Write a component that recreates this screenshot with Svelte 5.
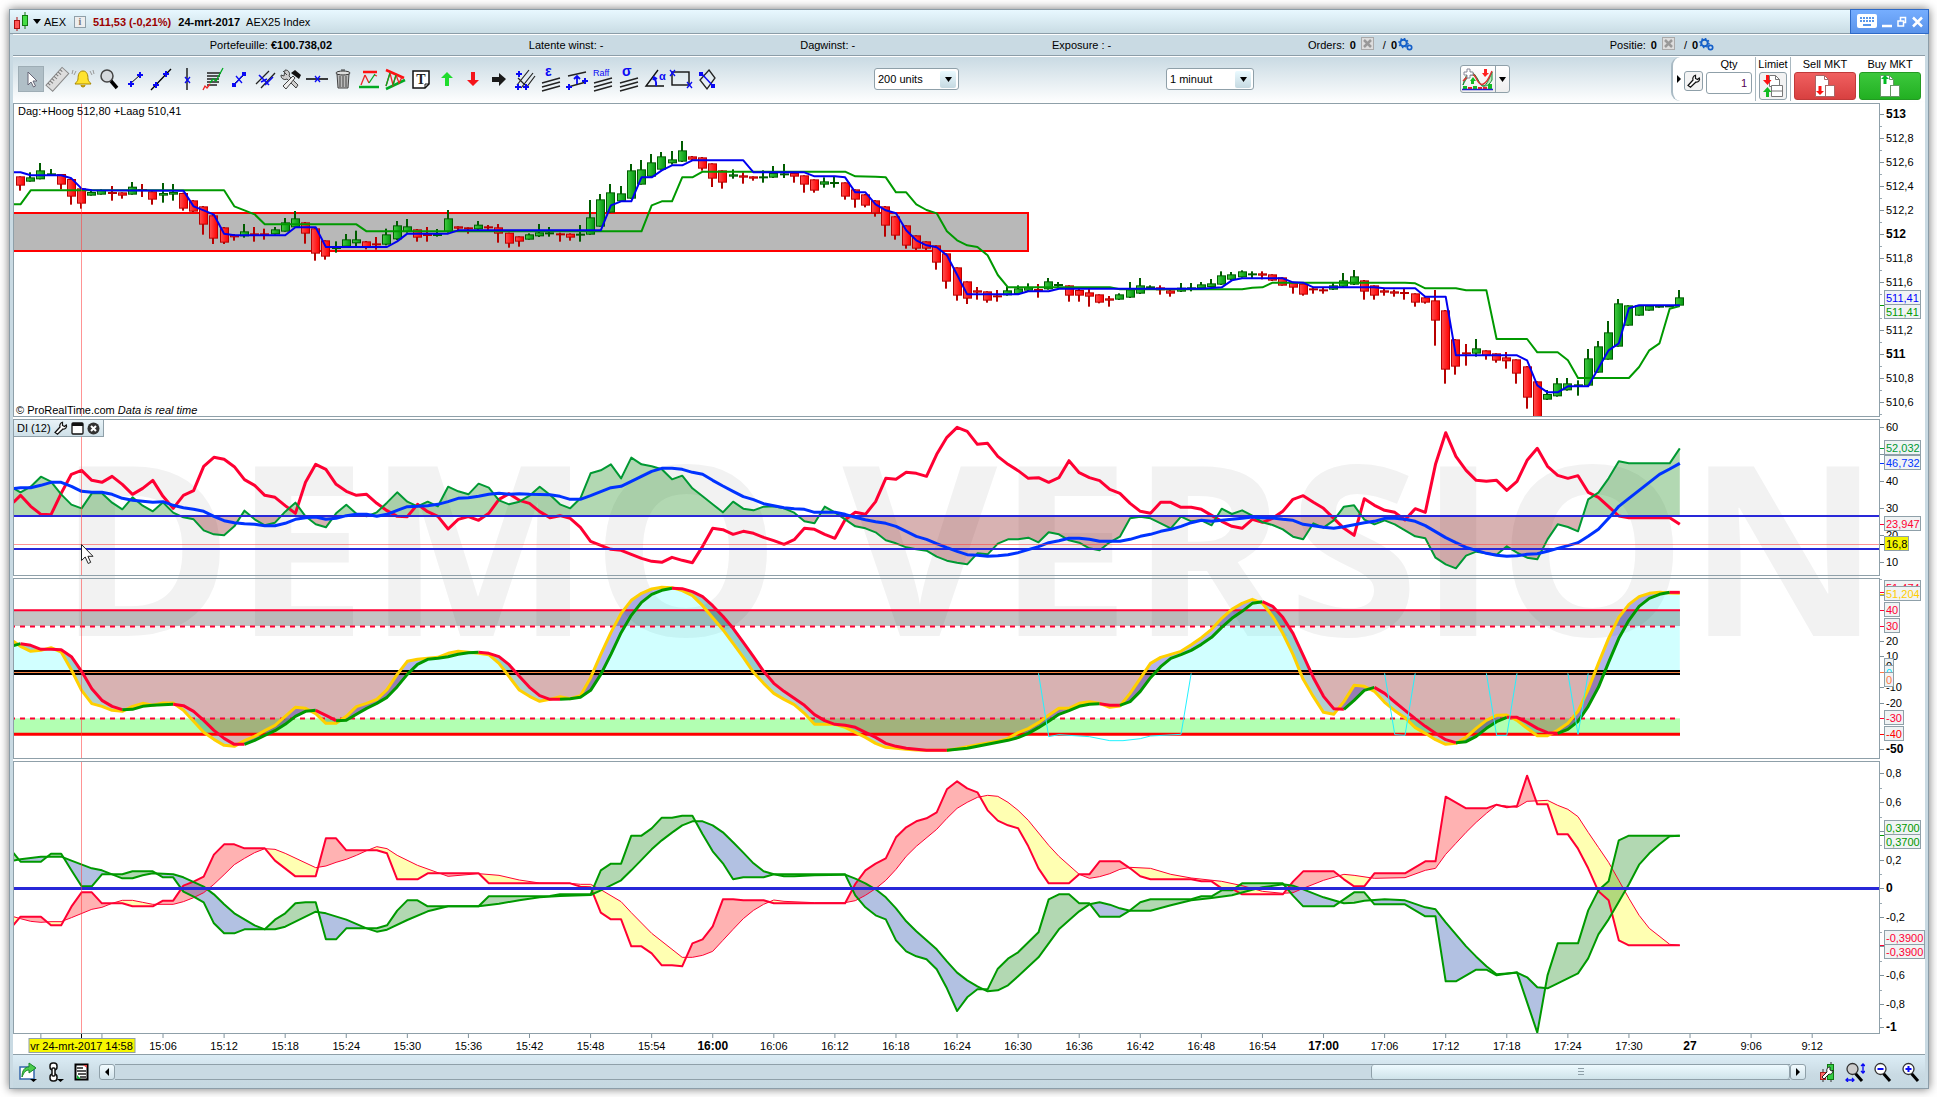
<script>
  // Horizontal scale: one bar per minute, bar 0 is 14:52.
  const bx = (i) => 20.5 + 10.18 * i;

  // Series are listed as a left-edge value followed by bars 0..163,
  // or as "bar,value" pairs that are interpolated in between.
  const dense = (s) => s.trim().split(/\s+/).map((v, n) => [n === 0 ? -0.7 : n - 1, Number(v)]);
  const sparse = (s) => s.trim().split(/\s+/).map((p) => p.split(',').map(Number));
  const pts = (a) => a.map(([i, v]) => `${bx(i).toFixed(1)},${v}`).join(' ');

  function at(a, i) {
    for (let n = 1; n < a.length; n++) {
      if (i <= a[n][0]) {
        const [i0, v0] = a[n - 1];
        const [i1, v1] = a[n];
        return v0 + ((v1 - v0) * (i - i0)) / (i1 - i0);
      }
    }
    return a[a.length - 1][1];
  }

  // Splits the area between two series into runs with a above b and runs with a below b.
  function between(a, b) {
    const out = { up: '', down: '' };
    const idx = [-0.7];
    for (let i = 0; i <= 163; i++) idx.push(i);
    const rows = [];
    for (const i of idx) {
      const va = at(a, i);
      const vb = at(b, i);
      const last = rows[rows.length - 1];
      if (last && (last[1] - last[2]) * (va - vb) < 0) {
        const t = (last[1] - last[2]) / (last[1] - last[2] - (va - vb));
        const v = last[1] + (va - last[1]) * t;
        rows.push([last[0] + (i - last[0]) * t, v, v]);
      }
      rows.push([i, va, vb]);
    }
    let run = [rows[0]];
    const flush = () => {
      if (run.length < 2) return;
      const d = run.reduce((s, r) => s + r[1] - r[2], 0);
      const p = [...run.map((r) => [r[0], r[1]]), ...run.slice().reverse().map((r) => [r[0], r[2]])];
      out[d < 0 ? 'up' : 'down'] += 'M' + p.map(([i, v]) => `${bx(i).toFixed(1)} ${v.toFixed(1)}`).join('L') + 'Z';
    };
    for (let n = 1; n < rows.length; n++) {
      run.push(rows[n]);
      if (Math.abs(rows[n][1] - rows[n][2]) < 0.01) {
        flush();
        run = [rows[n]];
      }
    }
    flush();
    return out;
  }
  const level = (v) => [[-0.7, v], [163, v]];

  // Candles: high, body top, body bottom, low; r = falling, g = rising.
  const candles = `r229,229,257,272 g217,232,245,245 g189,211,238,238 g207,220,224,226 r222,222,254,268 r236,237,290,314 r264,265,311,326 g270,276,287,287
g268,270,284,284 r258,276,280,302 r277,277,287,296 g246,260,284,284 r252,267,270,291 r273,274,299,314 g249,279,287,308 g252,276,284,302
r278,279,326,332 r300,301,335,336 r318,319,374,404 r345,346,416,432 r381,382,428,432 r402,405,412,422 g372,394,409,413 r381,400,404,425
r386,400,404,419 g381,388,403,404 g354,367,395,395 g333,355,382,384 r366,367,401,431 r384,385,461,482 r421,421,470,479 g424,441,445,458
g402,418,440,442 g392,418,430,440 r423,424,443,448 r411,430,434,449 g386,403,434,436 g363,376,418,420 g357,379,396,398 r387,388,413,425
r381,402,406,425 g387,402,406,410 g330,355,396,398 r379,379,386,392 r382,382,388,401 g363,374,388,390 r375,379,383,392 r372,382,401,428
r398,398,431,443 r409,409,425,440 g400,403,419,419 g372,397,409,411 g381,397,403,410 r398,400,404,425 r400,401,413,422 g375,401,407,425
g300,352,404,404 g282,298,380,380 g252,277,338,338 g258,280,304,306 g192,211,296,296 g180,208,254,254 g162,187,230,232 g156,169,209,209
g153,178,190,194 g123,151,185,186 r168,169,179,180 r171,172,206,212 r190,190,236,261 r211,211,248,266 g208,223,230,236 r217,226,233,251
r229,229,236,242 g211,229,233,248 g198,219,233,234 g192,220,224,234 r218,219,230,248 r226,226,254,278 r238,238,272,278 g232,244,254,263
g231,246,250,263 r247,247,290,299 r268,268,299,323 r282,283,317,322 r300,301,340,350 r318,319,377,410 r348,349,407,419 r376,376,437,446
r406,406,446,450 r424,424,446,450 r436,436,488,509 r460,460,545,566 r502,502,587,602 r544,544,596,612 r561,571,578,599 r574,574,602,608
r570,586,590,605 g560,571,586,587 g556,565,582,584 g550,562,572,573 r552,567,571,593 g534,544,568,569 g546,552,556,562 r556,556,587,605
r565,570,587,605 r567,577,590,620 r583,583,608,610 r588,595,602,620 g580,583,599,600 g546,568,593,594 g534,556,581,582 g556,559,563,566
r556,562,571,584 r570,571,581,590 g549,563,575,576 g549,562,566,574 g546,553,565,566 g537,550,561,562 g514,526,554,555 g516,523,539,540
g511,514,532,533 g514,520,524,534 r514,520,527,538 r523,523,542,543 r532,532,557,557 r546,547,563,581 r550,551,584,587 r564,565,569,581
r562,568,572,581 g547,556,569,570 g519,541,560,562 g510,529,554,555 r540,541,575,599 r556,556,587,599 r565,571,578,587 r569,574,581,590
r567,576,580,599 r580,580,608,620 r591,592,608,611 r570,601,662,737 r630,631,809,851 r717,718,800,824 r732,757,761,797 g717,745,761,770
r751,751,767,779 r760,760,782,788 r756,772,784,806 r778,778,821,851 r798,799,893,926 r844,844,960,960 g870,882,899,900 g834,850,889,890
g834,850,871,872 g841,853,857,887 g747,775,857,858 g723,739,818,818 g663,697,779,779 g597,610,740,740 g616,616,677,677 g616,616,647,647
g616,617,632,632 g616,617,623,623 g615,616,619,619 g570,592,617,617`
    .split(/\s+/)
    .map((c, i) => {
      const [hi, top, bottom, lo] = c.slice(1).split(',').map(Number);
      return { x: Math.floor(bx(i)), up: c[0] === 'g', hi, top, h: Math.max(6, bottom - top), lo };
    });

  const fast = sparse(`-0.7,217 0,217 1,226 4,226 5,235 6,266 7,271 16,272 17,319 18,331 19,344 20,401 21,406 26,406 27,382 29,382 30,441 36,441 37,424 38,401
42,401 43,391 57,391 58,316 59,304 60,304 61,232 62,232 63,211 64,196 65,196 66,181 71,181 72,217 77,217 78,229 80,229 81,232 82,277 83,277 84,313 85,331 86,340
87,391 88,421 89,436 90,442 91,466 92,524 93,583 98,583 99,574 101,574 102,566 116,566 118,562 119,541 120,535 124,535 125,547 126,548 127,562 133,562 134,565
137,565 138,590 140,590 141,766 147,766 148,781 149,856 150,877 151,877 152,859 154,859 155,805 156,751 157,730 158,625 159,616 163,616`);
  const slow = sparse(`-0.7,313 0,313 1,271 20,271 21,319 22,331 23,343 24,373 33,373 34,394 61,394 62,316 63,304 64,304 65,232 66,232 67,215 81,215 82,229 84,230
85,232 86,277 87,277 88,313 89,330 90,340 91,394 92,421 93,436 94,441 95,466 96,525 97,562 107,562 108,568 120,568 121,563 122,562 123,548 136,548 137,550
138,565 141,565 142,571 144,571 145,717 148,717 149,757 151,757 152,781 153,834 158,834 159,801 160,751 161,730 162,626 163,618`);

  const diMinus = dense(`277 256 289 313 314 250 193 181 211 217 199 223 253 235 211 259 295 256 242 169 142 148 170 209 226 256 262 287 310 217 163 178 223 244
256 253 280 302 319 320 283 305 319 357 328 320 331 310 268 251 271 280 305 323 317 325 352 394 406 418 421 433 445 454 457 442 451 458 409 355 359 373 364 370 382
392 403 389 355 358 373 385 329 307 313 275 205 208 187 190 199 133 82 52 64 103 100 139 163 182 205 203 217 203 152 188 203 212 238 250 280 304 310 277 277 292
292 298 316 334 349 355 328 337 325 304 268 257 277 295 325 355 376 266 286 301 307 330 296 307 163 68 139 181 211 214 211 241 214 151 115 169 196 205 197 247 262
290 318 323 323 323 323 323 343`);
  const diPlus = dense(`235 247 230 200 215 253 284 295 250 250 278 298 262 287 304 277 308 322 328 361 373 376 349 302 328 346 338 305 278 319 343 352 310 284 311
319 307 278 247 275 289 275 289 230 244 253 221 233 271 283 275 257 230 254 283 295 265 190 181 163 205 143 163 169 178 208 197 235 259 283 307 275 296 301 290 289
295 308 334 340 290 307 328 349 355 367 391 400 412 418 422 440 452 458 463 430 433 401 388 388 383 397 367 373 391 398 415 421 397 380 325 320 325 340 355 320 334
331 346 296 312 301 317 337 345 358 380 388 340 353 331 290 286 329 343 331 343 361 379 385 443 463 475 437 425 430 434 409 428 443 448 388 343 351 364 268 248 205
154 160 160 160 160 160 115`);
  const diAvg = sparse(`-0.7,236 0,233 1,233 2,226 3,217 4,217 5,229 6,244 7,247 8,247 9,253 10,265 11,271 12,274 13,277 14,275 15,286 16,293 17,298 18,304 19,319
20,332 21,338 22,341 23,343 24,347 25,347 26,340 27,328 28,323 29,321 30,328 31,325 32,317 33,313 34,313 35,319 36,313 37,301 38,290 39,289 40,287 41,283 42,275
43,265 44,263 45,259 46,253 47,250 48,253 49,251 50,253 52,254 53,259 54,268 55,268 56,257 57,245 58,233 59,229 60,214 61,199 62,184 63,175 64,175 65,178 66,187
67,193 68,211 69,228 70,244 71,260 72,269 73,281 74,287 75,293 76,296 77,298 78,307 80,307 81,313 82,322 83,329 84,335 85,340 86,349 87,364 88,379 89,388 90,401
91,413 92,424 93,434 94,436 95,439 96,437 97,434 98,428 99,419 100,410 101,398 102,392 103,385 104,385 105,388 106,394 108,394 109,388 110,379 111,373 112,364
113,358 114,349 115,338 116,331 117,334 118,331 119,328 120,325 121,321 122,323 123,324 124,328 125,331 126,343 127,347 128,352 129,355 130,350 131,344 132,338
133,334 134,325 135,325 136,328 137,334 138,347 139,365 140,383 141,398 142,412 143,421 144,430 145,436 146,439 147,437 148,433 149,431 150,424 151,415 152,407
153,398 154,379 155,358 156,325 157,289 158,265 159,241 160,217 161,193 162,177 163,160`);

  const cycle = dense(`694 709 724 721 713 726 780 841 881 889 901 904 889 880 886 879 879 901 934 967 988 1006 1009 992 979 962 946 919 892 895 911 940 940 919
890 880 868 839 793 754 748 745 742 730 724 727 730 734 760 800 840 859 874 868 860 866 857 803 733 668 610 571 550 537 532 533 542 557 587 623 659 700 742 787
820 850 868 884 910 943 943 943 952 967 982 1000 1012 1015 1018 1020 1021 1021 1021 1016 1010 1004 999 994 985 968 956 938 916 895 895 880 875 880 892 888 850 805
760 742 733 724 704 683 658 625 598 580 568 580 619 670 733 808 860 907 913 875 826 829 844 877 902 923 953 970 989 1003 1000 982 955 931 916 915 931 955 977 977
961 940 904 838 760 685 622 583 560 550 547 549 550`);
  const signal = dense(`707 701 706 718 718 719 740 784 836 871 889 899 898 889 886 884 883 887 904 931 961 985 1003 1003 991 976 962 943 919 904 901 916 932 931
913 895 880 862 830 793 763 748 745 740 733 728 727 730 740 764 799 832 857 868 868 866 862 841 793 733 668 616 577 553 541 535 536 545 560 587 619 655 697 740
784 820 844 865 886 914 932 943 946 952 967 982 1000 1009 1015 1018 1021 1021 1021 1018 1015 1009 1003 997 991 983 970 953 934 913 902 889 883 881 886 886 875 844
803 770 745 734 721 703 682 652 625 604 580 575 589 622 670 736 803 859 896 898 871 841 832 850 876 901 926 949 970 989 998 995 979 955 935 922 922 937 955 968
970 958 934 889 832 757 685 631 589 565 553 547 547`);
  const signalRuns = [];
  for (let n = 1; n < signal.length; n++) {
    const up = signal[n][1] < signal[n - 1][1];
    const last = signalRuns[signalRuns.length - 1];
    if (last && last.up === up) last.p.push(signal[n]);
    else signalRuns.push({ up, p: [signal[n - 1], signal[n]] });
  }
  const probes = [
    '100,790 101,980 102,974 105,980 107,992 108.3,992 110,986 111,978 114,973 115,790',
    '134,790 135,974 136,976 137,790',
    '144,790 145,976 146,976 147,790',
    '152,790 153,973 154,790'
  ].map(sparse);

  const bear = sparse(`-0.7,525 0,500 2,500 3,526 4,526 5,470 6,427 7,427 8,460 10,460 11,469 13,469 14,452 15,452 16,407 17,395 18,380 19,314 20,283 21,283 22,295
24,295 25,332 27,379 29,379 30,265 31,265 32,301 35,301 36,310 37,388 39,388 40,370 45,370 46,400 54,400 55,410 56,412 57,488 58,508 59,508 60,589 61,589 62,610
63,646 64,646 65,649 66,580 67,568 68,529 69,448 70,448 71,451 73,451 74,460 81,460 82,402 83,361 84,341 85,325 86,262 87,232 88,214 89,205 90,187 91,118 92,94
93,115 94,127 95,181 96,212 97,226 98,235 99,289 100,355 101,400 103,400 104,373 105,373 106,334 108,334 109,355 110,379 111,388 115,388 116,394 117,394 118,415
119,416 120,433 124,433 125,395 126,364 129,364 130,388 131,409 132,409 133,370 136,370 138,334 139,334 140,140 142,175 144,175 145,164 146,172 147,168 148,77
149,163 150,163 151,253 152,253 153,296 154,355 155,424 156,451 157,571 158,586 163,586`);
  const bearAvg = sparse(`-0.7,500 0,506 1,514 2,517 3,515 4,515 5,503 7,478 8,472 9,460 10,451 11,451 12,457 13,463 15,463 16,455 17,443 18,428 19,403 20,374
21,344 22,325 23,308 24,296 25,298 26,310 29,353 30,348 31,337 32,328 33,316 34,302 35,290 36,296 37,316 39,346 42,379 45,371 47,376 49,390 51,399 54,400 55,403
56,403 57,419 59,455 60,488 62,550 65,622 66,622 67,616 68,604 69,571 70,538 71,506 72,481 73,463 74,450 75,454 78,458 81,458 82,452 83,436 84,416 85,391 86,358
87,319 88,289 90,238 91,205 92,175 93,157 94,142 95,136 96,139 97,157 98,181 99,211 101,286 102,319 104,373 105,385 106,380 107,371 108,358 109,352 111,355
113,373 115,384 118,394 120,407 122,424 124,430 125,428 126,415 128,391 130,373 131,376 133,385 136,383 138,361 139,355 140,313 141,280 142,247 143,217 144,190
145,165 146,168 147,172 148,154 150,151 151,166 152,178 153,200 154,247 155,292 156,337 157,391 158,445 159,496 160,535 162,583 163,586`);
  const bull = sparse(`-0.7,309 0,335 2,335 3,311 4,311 5,361 6,409 7,409 8,373 10,373 11,364 13,364 14,382 15,382 16,425 17,440 18,457 19,520 20,550 21,550 22,538
24,538 25,509 26,490 27,460 28,457 29,457 30,568 31,568 32,535 35,535 36,526 37,482 38,451 39,451 40,469 45,469 46,439 52,438 53,433 56,433 57,361 58,341 59,341
60,257 61,257 62,235 63,203 64,203 65,197 66,197 67,253 68,304 69,340 70,388 71,382 73,382 74,373 81,373 82,436 83,472 84,496 85,508 86,571 87,604 88,619 89,628
90,658 91,715 92,783 93,742 94,718 95,718 96,656 97,626 98,607 99,577 100,547 101,448 102,433 103,433 104,460 105,460 106,500 108,500 109,481 110,457 111,448
115,448 116,439 117,439 118,421 119,421 120,400 124,400 125,437 126,469 129,469 130,448 131,427 132,427 133,463 136,463 138,499 139,499 140,694 141,694 143,659
144,659 145,676 147,667 148,757 149,848 150,676 151,580 153,580 154,481 155,421 156,394 157,271 158,257 163,257`);
  const bullAvg = sparse(`-0.7,332 0,328 2,320 4,320 5,332 7,355 8,361 9,373 10,385 11,385 12,376 13,370 15,373 16,382 18,410 19,433 20,463 21,490 23,526 24,538
25,538 26,530 29,485 30,490 32,509 34,535 35,545 36,539 38,510 40,484 42,469 45,469 47,461 49,451 51,442 53,438 56,435 57,421 59,391 60,361 62,298 63,271 64,248
65,226 66,214 67,214 68,226 69,247 70,277 71,308 72,340 73,364 74,373 75,379 76,379 78,376 81,374 82,386 83,400 84,418 85,442 86,475 87,514 88,544 90,598 91,634
92,668 93,691 94,709 95,724 96,721 97,706 98,679 100,622 101,580 102,538 104,484 105,463 106,457 107,464 108,475 109,482 111,482 113,466 115,451 117,444 119,436
121,419 122,412 124,403 125,407 126,418 128,442 130,460 131,458 132,452 134,448 136,451 138,472 139,478 140,517 141,553 142,589 143,620 144,649 145,673 147,668
148,682 149,712 150,715 151,700 153,670 154,625 155,553 156,508 157,455 158,403 159,344 160,310 161,283 162,259 163,257`);

  const diFill = between(diPlus, level(318));
  const signalFill = between(signal, level(787));
  const gapFill = between(cycle, signal);
  const bearFill = between(bear, bearAvg);
  const bullFill = between(bull, bullAvg);

  // Value axis: [y, text, bold], tick-only entries have no text.
  const labels = [
    [114, '513', 1], [138, '512,8'], [162, '512,6'], [186, '512,4'], [210, '512,2'], [234, '512', 1], [258, '511,8'], [282, '511,6'],
    [330, '511,2'], [354, '511', 1], [378, '510,8'], [402, '510,6'],
    [427, '60'], [454, ''], [481, '40'], [508, '30'], [535, '20'], [562, '10'],
    [595, ''], [641, '20'], [656, '10'], [687, '-10'], [703, '-20'], [749, '-50', 1],
    [773, '0,8'], [802, '0,6'], [831, ''], [860, '0,2'], [888, '0', 1], [917, '-0,2'], [946, ''], [975, '-0,6'], [1004, '-0,8'], [1027, '-1', 1]
  ];
  const minor = [126, 150, 174, 198, 222, 246, 270, 294, 318, 342, 366, 390, 414, 579, 788, 817, 845, 874, 903, 932, 961, 990, 1018];
  const red = '#ff0033';
  const tags = [
    { y: 290, t: '511,41', w: 36, c: '#0000ff' },
    { y: 304, t: '511,41', w: 36, c: '#009900', k: 305 },
    { y: 440, t: '52,032', w: 36, c: '#009933', k: 448 },
    { y: 455, t: '46,732', w: 36, c: '#0033ff', k: 463 },
    { y: 516, t: '23,947', w: 36, c: red, k: 524 },
    { y: 536, t: '16,8', w: 24, c: '#000000', bg: '#f4f400', k: 544 },
    { y: 580, t: '51,474', w: 36, c: red, k: 592 },
    { y: 586, t: '51,204', w: 36, c: '#ffcc00', k: 594 },
    { y: 602, t: '40', w: 15, c: red, k: 610 },
    { y: 618, t: '30', w: 15, c: red, k: 626 },
    { y: 658, t: '0', w: 9, c: '#000000' },
    { y: 665, t: '0', w: 9, c: '#00e5ff' },
    { y: 672, t: '0', w: 9, c: '#ff7744', k: 672 },
    { y: 710, t: '-30', w: 19, c: red, k: 718 },
    { y: 726, t: '-40', w: 19, c: '#ff0000', k: 734 },
    { y: 820, t: '0,3700', w: 36, c: '#009900' },
    { y: 834, t: '0,3700', w: 36, c: '#009900', k: 835 },
    { y: 930, t: '-0,3900', w: 40, c: red },
    { y: 944, t: '-0,3900', w: 40, c: red, k: 945 }
  ];

  const times = [[2, ''], [8, '']];
  for (let i = 14; i <= 158; i += 6) {
    const m = 52 + i;
    times.push([i, `${14 + Math.floor(m / 60)}:${String(m % 60).padStart(2, '0')}`]);
  }
  times.push([164, '27'], [170, '9:06'], [176, '9:12']);
  const pct = (x) => `${((x - 13) / 1912) * 100}%`;

  const cross = (x, y) => `<path d="M${x - 3} ${y}h6M${x} ${y - 3}v6" stroke="#0a0af5" stroke-width="2"/>`;
  const ex = (x, y) => `<path d="M${x - 2} ${y - 3}l5 6m0-6l-5 6" stroke="#0a0af5" stroke-width="1.3"/>`;
  const hatch = '<path d="M3 16l18-5M3 20l18-5M3 24l18-5" stroke="#222" stroke-width="1.4"/>';
  const tools = [
    ['Aanwijzer', '<path d="M9 5v13l3-3 2.500 5 2-1-2.500-5h4z" fill="#fff" stroke="#667" />'],
    ['Meetlat', '<g transform="rotate(-48 12 12)"><rect x="0" y="8" width="24" height="9" fill="#ddd" stroke="#888"/><path d="M3 8v3M6 8v4M9 8v3M12 8v4M15 8v3M18 8v4M21 8v3" stroke="#777"/></g>'],
    ['Alarm', '<path d="M12 4c-4 0-5 4-5 8 0 2-2 3-3 5h16c-1-2-3-3-3-5 0-4-1-8-5-8z" fill="#ffe32e" stroke="#a88700"/><path d="M10 18a2 2 0 0 0 4 0" fill="#d9a800" stroke="#a88700"/><path d="M5 4l-2 4M2 3L1 7M19 4l2 4M22 3l1 4" stroke="#999"/>'],
    ['Zoom', '<circle cx="10" cy="9" r="6" fill="#d5d9dd" stroke="#444" stroke-width="1.500"/><path d="M14 14l6 7" stroke="#000" stroke-width="3.500"/>'],
    ['Segment', '<path d="M7 17l10-9" stroke="#000"/>' + cross(8, 17) + cross(17, 8)],
    ['Rechte lijn', '<path d="M2 23L22 2" stroke="#000" stroke-width="1.300"/>' + cross(7, 18) + cross(17, 7)],
    ['Verticale lijn', '<path d="M12 1v22" stroke="#000" stroke-width="1.300"/>' + ex(12, 13)],
    ['Fibonacci', '<path d="M6 6h14M6 9h13M6 12h12M6 15h12M6 18h10" stroke="#222" stroke-width="1.300"/><path d="M9 16l3-4 3 2 7-13" stroke="#0a2" fill="none" stroke-width="1.300"/><path d="M2 23l2-4 2 2 3-4" stroke="#e22" fill="none" stroke-width="1.300"/>'],
    ['Gespiegeld segment', '<path d="M6 18L18 7" stroke="#000"/><path d="M9 9l6 7m0-7l-6 7" stroke="#0a0af5" stroke-width="1.300"/><rect x="5" y="16" width="4" height="4" fill="#0a0af5"/><rect x="15" y="5" width="4" height="4" fill="#0a0af5"/>'],
    ['Evenwijdige lijnen', '<path d="M3 17L16 4M8 21L22 6" stroke="#222" stroke-width="1.300"/><path d="M12 18l8-8M6 8l10 10M8 15l6-3" stroke="#0a0af5" stroke-width="1.600"/>'],
    ['Instellingen', '<path d="M4 4l4 4M6 3a4 4 0 0 1 4 6l9 9-2 3-9-9a4 4 0 0 1-6-4l3 1z" fill="#ccc" stroke="#444"/><path d="M4 19L14 9l2 2L7 22z" fill="#eee" stroke="#444"/><path d="M12 6l4-3 6 5-2 4z" fill="#111"/>'],
    ['Horizontale lijn', '<path d="M1 12h22" stroke="#000" stroke-width="1.500"/>' + ex(12, 12)],
    ['Verwijderen', '<path d="M6 7h12l-1 14H7z" fill="#bbb" stroke="#444"/><path d="M9 9v11M12 9v11M15 9v11" stroke="#444"/><ellipse cx="12" cy="6" rx="7" ry="2" fill="#ddd" stroke="#333"/><path d="M10 3h4" stroke="#333"/>'],
    ['Steun en weerstand', '<path d="M6 5h14" stroke="#f11" stroke-width="2.500"/><path d="M2 20h20" stroke="#0a2" stroke-width="2.500"/><path d="M4 18l4-10" stroke="#e22" stroke-width="1.300"/><path d="M8 8l4 8M17 8l3 1" stroke="#e22" stroke-width="1.300"/><path d="M12 16l6-9" stroke="#0a2" stroke-width="1.300"/>'],
    ['Driehoek', '<path d="M3 3l18 8" stroke="#f11" stroke-width="2.500"/><path d="M3 22l19-9" stroke="#0a2" stroke-width="2.500"/><path d="M3 19L7 6l3 12 3-10 3 8 3-6" stroke="#e22" stroke-width="1.300" fill="none"/><path d="M3 19L7 6M10 18l3-10" stroke="#0a2" stroke-width="1.300"/>'],
    ['Tekst', '<path d="M4 4h16v13l-4 4H4z" fill="#fff" stroke="#111" stroke-width="1.500"/><path d="M16 21v-4h4" stroke="#111"/><text x="12" y="17" text-anchor="middle" font-family="Liberation Serif, serif" font-weight="700" font-size="14" fill="#222">T</text>'],
    ['Pijl omhoog', '<path d="M12 5l6 6h-4v8h-4v-8H6z" fill="#1fdc2d"/>'],
    ['Pijl omlaag', '<path d="M12 19l6-6h-4V5h-4v8H6z" fill="#f5141a"/>'],
    ['Pijl rechts', '<path d="M19 12l-7-6v4H5v5h7v4z" fill="#1a1a1a"/>'],
    ['Vork', '<path d="M4 18L16 3M8 21L20 6M13 21l9-12M5 11l7 7" stroke="#222" stroke-width="1.200"/>' + cross(6, 7) + cross(5, 20) + cross(13, 20)],
    ['Regressiekanaal epsilon', hatch + '<text x="6" y="9" font-size="14" font-weight="700" fill="#0a0af5">ε</text>'],
    ['Kanaal', '<path d="M3 9l18-4M3 20l18-5" stroke="#222" stroke-width="1.300"/><path d="M12 17V9m-3 3l3-3 3 3" stroke="#0a0af5" stroke-width="1.800" fill="none"/>' + cross(4, 20) + cross(20, 14)],
    ['Raff kanaal', hatch + '<text x="2" y="9" font-size="9" fill="#0a0af5">Raff</text>'],
    ['Standaarddeviatie', hatch + '<text x="5" y="9" font-size="14" font-weight="700" fill="#0a0af5">σ</text>'],
    ['Hoek', '<path d="M15 3L3 19h18" fill="none" stroke="#111" stroke-width="1.400"/><path d="M11 11q3 4 2 8M10 13l1-3 3 2" stroke="#0a0af5" stroke-width="1.700" fill="none"/><text x="16" y="13" font-size="11" font-weight="700" fill="#0a0af5">α</text>'],
    ['Rechthoek', '<rect x="3" y="5" width="17" height="13" fill="none" stroke="#111" stroke-width="1.400"/>' + ex(3, 6) + ex(20, 18)],
    ['Ruit', '<path d="M14 3l6 8-8 11-7-9z" fill="none" stroke="#222" stroke-width="1.300"/><path d="M6 6l13 14" stroke="#0a0af5" stroke-width="1.500"/><rect x="4" y="5" width="4" height="4" fill="#0a0af5"/><rect x="16" y="17" width="4" height="4" fill="#0a0af5"/>']
  ];
</script>

{#snippet wrench()}
  <svg width="14" height="14" viewBox="0 0 14 14" aria-hidden="true">
    <path d="M1 11.500l5-5.500c-.7-2 .3-4 2.500-4.700V4.500l2 1 1.800-1.500c1 2-.8 4.500-3.300 4L3.500 13.200z" fill="#fff" stroke="#111" stroke-width="1.200" />
  </svg>
{/snippet}

{#snippet status(name)}
  <span class="item">
    {name}: <b>0</b>
    <svg class="off" width="13" height="13" viewBox="0 0 13 13" aria-hidden="true">
      <rect x=".5" y=".5" width="12" height="12" fill="#ddd" stroke="#aaa" /><path d="M3 3l7 7m0-7l-7 7" stroke="#999" stroke-width="2.500" />
    </svg>
    <span class="slash">/</span> <b>0</b><svg class="gears" width="15" height="13" viewBox="0 0 15 13" aria-hidden="true">
      <circle cx="5.500" cy="5" r="3.300" fill="none" stroke="#1560c8" stroke-width="2" /><circle cx="5.500" cy="5" r="4.500" fill="none" stroke="#1560c8" stroke-width="1.500" stroke-dasharray="1.500 2" />
      <circle cx="11.500" cy="9.500" r="2.200" fill="#cfe0f5" stroke="#1560c8" stroke-width="1.700" />
    </svg>
  </span>
{/snippet}

{#snippet glass(sign)}
  <svg width="20" height="20" viewBox="0 0 20 20" aria-hidden="true">
    <path d="M10 11l7 8" stroke="#000" stroke-width="3" />
    <circle cx="7.500" cy="7" r="5.500" fill={sign ? '#fff' : '#ccc'} stroke="#333" stroke-width="1.300" />
    {#if sign}<path d={sign === '+' ? 'M4.500 7h6M7.500 4v6' : 'M4.500 7h6'} stroke="#0a0af5" stroke-width="2" />
    {:else}<path d="M18 2v9M16 4l2-2 2 2M16 9l2 2 2-2M1 18h8M3 16l-2 2 2 2M7 16l2 2-2 2" stroke="#0a0af5" stroke-width="1.300" fill="none" />{/if}
  </svg>
{/snippet}

<div class="page">
  <main class="window">
    <header class="title">
      <svg width="16" height="20" viewBox="0 0 16 20" aria-hidden="true">
        <path d="M4 5v14" stroke="#a11" /><rect x="1.500" y="8.500" width="5" height="8" fill="#f55" stroke="#a11" />
        <path d="M12 0v17" stroke="#171" /><rect x="9.500" y="3.500" width="5" height="10" fill="#4d4" stroke="#171" />
      </svg>
      <svg class="caret" width="8" height="5" viewBox="0 0 8 5" aria-hidden="true"><path d="M0 0h8L4 5z" /></svg>
      <span class="sym">AEX</span>
      <button class="info" aria-label="Info">i</button>
      <b class="loss">511,53 (-0,21%)</b>
      <b class="date">24-mrt-2017</b>
      <span>AEX25 Index</span>
      <div class="winctl">
        <button aria-label="Toetsenbord">
          <svg width="20" height="15" viewBox="0 0 20 15"><rect width="20" height="14" rx="2" fill="#fff" /><path d="M3 4h14M3 7h14" stroke="#5a98ea" stroke-width="2" stroke-dasharray="2 1" /><path d="M6 11h8" stroke="#5a98ea" stroke-width="2" /></svg>
        </button>
        <button aria-label="Minimaliseren"><svg width="10" height="12" viewBox="0 0 10 12"><path d="M0 10h10" stroke="#fff" stroke-width="2.500" /></svg></button>
        <button aria-label="Herstellen"><svg width="10" height="12" viewBox="0 0 10 12"><path d="M3.500 4.500v-3h5v5h-2M1 5h5.500v5H1z" fill="none" stroke="#fff" stroke-width="1.500" /></svg></button>
        <button aria-label="Sluiten"><svg width="11" height="12" viewBox="0 0 11 12"><path d="M1 1.500l9 9m0-9l-9 9" stroke="#fff" stroke-width="2.500" /></svg></button>
      </div>
    </header>

    <div class="body">
      <section class="summary">
        <span>Portefeuille: <b>€100.738,02</b></span>
        <span>Latente winst: <i>-</i></span>
        <span>Dagwinst: <i>-</i></span>
        <span>Exposure : <i>-</i></span>
        {@render status('Orders')}
        {@render status('Positie')}
      </section>

      <div class="toolbar">
        <nav class="tools">
          {#each tools as [name, art], n}
            <button class:active={n === 0} aria-label={name} title={name}>
              <svg width="24" height="24" viewBox="0 0 24 24" fill="none">{@html art}</svg>
            </button>
          {/each}
        </nav>
        <label class="combo units"><select aria-label="Aantal eenheden"><option>200 units</option></select><span><svg width="7" height="5" viewBox="0 0 7 5"><path d="M0 0h7L3.500 5z" /></svg></span></label>
        <label class="combo frame"><select aria-label="Tijdsbestek"><option>1 minuut</option></select><span><svg width="7" height="5" viewBox="0 0 7 5"><path d="M0 0h7L3.500 5z" /></svg></span></label>
        <div class="split">
          <button aria-label="Indicatoren">
            <svg width="32" height="24" viewBox="0 0 32 24">
              <path d="M1 18C5 2 11 2 16 13s8 7 14-8v8c-5 9-10 7-14 0S7 5 1 18z" fill="#bfe8bf" stroke="#183" />
              <path d="M1 14c5-4 9-12 13-3s9 10 16-7" fill="none" stroke="#d33" stroke-width="1.500" />
              <path d="M5 2h3v3h3v3H8v3H5V8H2V5h3z" fill="#fff" stroke="#889" />
              <path d="M23 10l4-4h-2V2h-3v4h-2z" fill="#f22" /><path d="M11 10l3 4h-2v3h-3v-3H8z" fill="#1b2" />
              <path d="M1 19h4v3H1zM11 19h4v3h-4zM26 17h4v5h-4z" fill="#1b2" /><path d="M6 20h4v2H6zM16 20h4v2h-4zM21 20h4v2h-4z" fill="#e22" /><path d="M0 22.500h31" stroke="#22c" stroke-width="1.500" />
            </svg>
          </button>
          <button aria-label="Meer indicatoren"><svg width="7" height="5" viewBox="0 0 7 5"><path d="M0 0h7L3.500 5z" /></svg></button>
        </div>
        <div class="order">
          <svg class="fold" width="4" height="8" viewBox="0 0 4 8" aria-hidden="true"><path d="M0 0v8l4-4z" /></svg>
          <button class="small" aria-label="Orderinstellingen">{@render wrench()}</button>
          <label class="qty">Qty<input value="1" /></label>
          <div class="field lim">
            <span>Limiet</span>
            <button aria-label="Limiet">
              <svg width="22" height="24" viewBox="0 0 22 24"><path d="M7.500 1.500h6l4 4v7h-10z" fill="#fff" stroke="#777" /><path d="M13.500 1.500v4h4" fill="none" stroke="#777" /><path d="M9.500 11.500h11v11h-11zM9.500 17h11" fill="#fff" stroke="#777" /><path d="M5.500 11l4-5H7V1H4v5H1z" fill="#f11" /><path d="M5.500 13l4 5H7v5H4v-5H1z" fill="#1b2" /></svg>
            </button>
          </div>
          <div class="field sell">
            <span>Sell MKT</span>
            <button aria-label="Sell MKT">
              <svg width="22" height="24" viewBox="0 0 22 24"><path d="M1.500 1.500h9l4 4v17h-13z" fill="#fff" stroke="#a66" /><path d="M10.500 1.500v4h4" fill="none" stroke="#a66" /><rect x="11.500" y="11.500" width="9" height="11" fill="#fff" stroke="#a66" /><path d="M6 21l4-4H7.500v-5h-3v5H2z" fill="#f11" /></svg>
            </button>
          </div>
          <div class="field buy">
            <span>Buy MKT</span>
            <button aria-label="Buy MKT">
              <svg width="22" height="24" viewBox="0 0 22 24"><path d="M1.500 1.500h9l4 4v17h-13z" fill="#fff" stroke="#696" /><path d="M10.500 1.500v4h4" fill="none" stroke="#696" /><rect x="11.500" y="11.500" width="9" height="11" fill="#fff" stroke="#696" /><path d="M6 1l4 4H7.500v5h-3V5H2z" fill="#0b2" /></svg>
            </button>
          </div>
        </div>
      </div>

      <div class="workspace">
        <div class="watermark" aria-hidden="true">DEMO VERSION</div>
        <div class="panels">
          <section class="panel price">
            <svg viewBox="14 12 1865 936" preserveAspectRatio="none">
              <defs>
                <linearGradient id="up"><stop offset="0" stop-color="#3fc93f" /><stop offset="1" stop-color="#069a12" /></linearGradient>
                <linearGradient id="dn"><stop offset="0" stop-color="#ff4a4a" /><stop offset="1" stop-color="#ff0505" /></linearGradient>
              </defs>
              <rect x="10" y="339" width="1018" height="114" fill="#b8b8b8" stroke="#ff0000" stroke-width="2" />
              {#each candles as c}
                <rect x={c.x - 1} y={c.hi} width="2" height={c.lo - c.hi} fill={c.up ? '#005c00' : '#b80000'} />
                <rect x={c.x - 4} y={c.top} width="9" height={c.h} fill={c.up ? '#005c00' : '#b80000'} />
                {#if c.h > 6}<rect x={c.x - 3} y={c.top + 3} width="7" height={c.h - 6} fill={c.up ? 'url(#up)' : 'url(#dn)'} />{/if}
              {/each}
              <polyline points={pts(slow)} stroke="#009900" stroke-width="2" />
              <polyline points={pts(fast)} stroke="#0000f0" stroke-width="2" />
              <path class="hair" d="M81.500 0V960" />
            </svg>
            <p class="range">Dag:+Hoog 512,80 +Laag 510,41</p>
            <p class="copy">© ProRealTime.com <em>Data is real time</em></p>
          </section>

          <section class="panel di">
            <svg viewBox="14 30 1865 465" preserveAspectRatio="none">
              <path d={diFill.up} fill="#007f00" fill-opacity=".3" />
              <path d={diFill.down} fill="#7f0000" fill-opacity=".3" />
              <polyline points={pts(diMinus)} stroke="#ff0033" stroke-width="3" />
              <polyline points={pts(diPlus)} stroke="#009933" stroke-width="2" />
              <path class="level" d="M10 318H1880M10 417H1880" />
              <polyline points={pts(diAvg)} stroke="#0033ff" stroke-width="3" />
              <path class="hair" d="M81.500 0V520M10 403.500H1880" />
            </svg>
            <div class="head">
              DI (12)
              <button aria-label="Indicator instellen">{@render wrench()}</button>
              <button aria-label="Venster"><svg width="13" height="13" viewBox="0 0 13 13"><rect x="1" y="1" width="11" height="11" rx="1" fill="#fff" stroke="#111" stroke-width="1.300" /><path d="M1 2.500h11" stroke="#111" stroke-width="3" /></svg></button>
              <button aria-label="Sluit indicator"><svg width="13" height="13" viewBox="0 0 13 13"><circle cx="6.500" cy="6.500" r="6" fill="#333" /><path d="M4 4l5 5m0-5L4 9" stroke="#fff" stroke-width="2" /></svg></button>
            </div>
            <svg class="pointer" width="13" height="21" viewBox="0 0 13 21" aria-hidden="true"><path d="M.5.500v16l3.700-3.500 3 6.500 2.500-1.200-2.800-6H12z" fill="#fff" stroke="#222" /></svg>
          </section>

          <section class="panel cycle">
            <svg viewBox="14 507 1865 537" preserveAspectRatio="none">
              <path d={signalFill.up} fill="#00ffff" fill-opacity=".18" />
              <rect x="10" y="601" width="1670" height="47" fill="#000" fill-opacity=".23" />
              <rect x="10" y="925" width="1670" height="48" fill="#00ff00" fill-opacity=".3" />
              <path d={signalFill.down} fill="#7f0000" fill-opacity=".3" />
              <path d={gapFill.up} fill="#0000bf" fill-opacity=".3" />
              <path d={gapFill.down} fill="#006060" fill-opacity=".3" />
              <path d="M10 601H1680" stroke="#ff0033" stroke-width="2" />
              <path d="M10 649.500H1680M10 925.500H1680" stroke="#ff0033" stroke-width="2" stroke-dasharray="5 5" />
              <path d="M10 973H1680" stroke="#ff0000" stroke-width="3" />
              <path d="M10 787.500H1680" stroke="#000" stroke-width="5" />
              <path d="M10 787.500H1680" stroke="#ff8844" stroke-width="1" />
              <polyline points={pts(cycle)} stroke="#ffd000" stroke-width="3" />
              {#each signalRuns as run}
                <polyline points={pts(run.p)} stroke={run.up ? '#009900' : '#ff0033'} stroke-width="3" />
              {/each}
              {#each probes as p}<polyline points={pts(p)} stroke="#22f2ff" stroke-width="1" />{/each}
              <path class="hair" d="M81.500 500V1050" />
            </svg>
          </section>

          <section class="panel trend">
            <svg viewBox="14 36 1865 813" preserveAspectRatio="none">
              <path d={bearFill.up} fill="#ff0000" fill-opacity=".3" />
              <path d={bearFill.down} fill="#ffff00" fill-opacity=".3" />
              <path d={bullFill.up} fill="#007f00" fill-opacity=".3" />
              <path d={bullFill.down} fill="#0033a0" fill-opacity=".3" />
              <polyline points={pts(bearAvg)} stroke="#ff0033" stroke-width="1" />
              <polyline points={pts(bear)} stroke="#ff0033" stroke-width="2" />
              <polyline points={pts(bullAvg)} stroke="#009900" stroke-width="2" />
              <polyline points={pts(bull)} stroke="#009900" stroke-width="2" />
              <path class="level zero" d="M10 415.500H1880" />
              <path class="hair" d="M81.500 0V860" />
            </svg>
          </section>
        </div>

        <svg class="values" viewBox="1880 103 45 931" width="45" height="931">
          {#each minor as y}<path d="M1880 {y + 0.5}h2" stroke="#9aa9b2" />{/each}
          {#each labels as [y, t, bold]}
            <path d="M1880 {y + 0.5}h4" stroke="#7f929c" />
            {#if t}<text x="1886" y={y + 4} font-weight={bold ? 700 : 400}>{t}</text>{/if}
          {/each}
          {#each tags as g}
            {#if g.k}<path d="M1880 {g.k + 0.5}h4" stroke={g.c} />{/if}
            <rect x="1884.500" y={g.y + 0.5} width={g.w} height="14" fill={g.bg ?? '#f0f3f4'} stroke="#8fa0a9" />
            <text x="1886" y={g.y + 12} fill={g.c}>{g.t}</text>
          {/each}
        </svg>
      </div>

      <svg class="times" width="100%" height="20">
        {#each times as [i, t]}
          <line x1={pct(bx(i))} x2={pct(bx(i))} y1="0" y2="4" />
          {#if t}<text x={pct(bx(i))} y="16" text-anchor="middle" class:strong={t === '16:00' || t === '17:00' || t === '27'}>{t}</text>{/if}
        {/each}
        <line class="now" x1={pct(81.5)} x2={pct(81.5)} y1="0" y2="5" />
        <svg x={pct(81.5)} y="4" overflow="visible">
          <rect x="-52.500" y=".5" width="106" height="14" fill="#f6f600" stroke="#8fa0a9" />
          <text x="0" y="12" text-anchor="middle">vr 24-mrt-2017 14:58</text>
        </svg>
      </svg>

      <footer class="bottom">
        <button aria-label="Delen">
          <svg width="20" height="20" viewBox="0 0 20 20"><rect x="2" y="5" width="14" height="12" fill="#fff" stroke="#36a" stroke-width="1.500" /><path d="M4 15C4 8 7 5 11 5V1l7 5-7 5V8c-3 0-5 2-7 7z" fill="#4dcb4d" stroke="#178a2a" /><path d="M12 17h7l-3.500 3z" fill="#000" /></svg>
        </button>
        <button aria-label="Koppelen">
          <svg width="20" height="20" viewBox="0 0 20 20"><g fill="#fff" stroke="#111" stroke-width="1.500"><rect x="5" y="1" width="7" height="7" rx="3" /><rect x="5" y="12" width="7" height="7" rx="3" /><rect x="7" y="6" width="3" height="8" rx="1" /></g><path d="M12 17h7l-3.500 3z" fill="#000" /></svg>
        </button>
        <button aria-label="Lijst">
          <svg width="16" height="18" viewBox="0 0 16 18"><rect x="1.500" y="1.500" width="12" height="15" fill="#fff" stroke="#000" stroke-width="2" /><path d="M3 5h6M3 8h9M4 11h8M6 14h6" stroke="#222" stroke-width="1.500" /><path d="M9 2h4v3z" fill="#d44" /><path d="M3 12l4 4H3z" fill="#1a3" /></svg>
        </button>
        <div class="scroll">
          <button class="end" aria-label="Naar links"><svg width="4" height="8" viewBox="0 0 4 8"><path d="M4 0v8L0 4z" /></svg></button>
          <div class="track"><button class="thumb" aria-label="Schuifbalk"><svg width="6" height="7" viewBox="0 0 6 7"><path d="M0 .5h6M0 3.500h6M0 6.500h6" stroke="#8fa0a9" /></svg></button></div>
          <button class="end" aria-label="Naar rechts"><svg width="4" height="8" viewBox="0 0 4 8"><path d="M0 0v8l4-4z" /></svg></button>
        </div>
        <div class="zoom">
          <button aria-label="Grafiekstijl">
            <svg width="16" height="20" viewBox="0 0 16 20"><path d="M4 7v13M12 0v20" stroke="#333" /><rect x="1.500" y="10.500" width="5" height="7" fill="#f66" stroke="#a22" /><rect x="8.500" y="2.500" width="6" height="15" fill="#3c4" stroke="#171" /><path d="M3 15l5-5c-1-3 1-5 3-5v3l2 1 1-1c0 3-2 5-4 4l-5 5z" fill="#fff" stroke="#222" /></svg>
          </button>
          <button aria-label="Zoom passend">{@render glass('')}</button>
          <button aria-label="Uitzoomen">{@render glass('-')}</button>
          <button aria-label="Inzoomen">{@render glass('+')}</button>
        </div>
      </footer>
    </div>
  </main>
</div>

<style>
  :global(body) { margin: 0; background: #fff; }
  .page { padding: 9px 8px 8px 9px; font: 11px/14px "Liberation Sans", Arial, sans-serif; color: #000; }
  .page * { box-sizing: border-box; }
  button { font: inherit; border: 0; padding: 0; margin: 0; background: none; color: inherit; display: flex; align-items: center; justify-content: center; flex: none; }
  p { margin: 0; }
  svg { display: block; flex: none; }
  .window { border: 1px solid #8c9da8; box-shadow: 0 0 9px rgba(0, 0, 0, 0.55); background: #c9dae3; }

  .title { display: flex; align-items: center; height: 24px; padding-left: 3px; border-bottom: 1px solid #8c9da8; background: linear-gradient(#e8f8ff, #c9dce4); white-space: nowrap; }
  .caret { margin: 0 3px 0 4px; }
  .sym { width: 30px; }
  .info { width: 12px; height: 12px; border: 1px solid #8fa0a9; background: #eee; color: #777; font: 700 10px/10px "Liberation Serif", serif; }
  .loss { margin-left: 7px; color: #9b0000; }
  .date { margin: 0 6px 0 7px; }
  .winctl { display: flex; align-items: center; align-self: stretch; gap: 5px; margin: -1px -1px -1px auto; padding: 0 5px 0 6px; border: 1px solid #2f6ac6; background: linear-gradient(#76aeff, #5a93ea); }

  .body { padding: 0 3px; }
  .summary { display: flex; align-items: center; justify-content: space-evenly; height: 22px; padding-right: 14px; border-top: 1px solid #fff; border-bottom: 1px solid #8c9da8; background: #c9dae3; white-space: nowrap; }
  .summary i { font-style: normal; }
  .item { display: flex; align-items: center; gap: 5px; }
  .slash { margin-left: 4px; }
  .off { margin-top: -3px; }
  .gears { margin: -2px 0 0 -4px; }

  .toolbar { display: flex; align-items: center; height: 47px; padding: 0 0 2px 5px; border-top: 1px solid #fff; background: linear-gradient(#c9dae3, #fff); }
  .tools { display: flex; flex: none; }
  .tools button { width: 26px; height: 26px; }
  .tools svg { overflow: visible; }
  .tools button.active { background: #b0bfc7; border: 1px solid #9eadb5; }
  .combo { display: flex; flex: none; align-items: center; height: 22px; border: 1px solid #8fa0a9; border-radius: 3px; background: #fff; padding-right: 2px; }
  .combo select { flex: 1; min-width: 0; height: 18px; padding: 0 3px; border: 0; appearance: none; background: none; font: inherit; color: inherit; }
  .combo span { display: flex; align-items: center; justify-content: center; width: 16px; height: 17px; border-radius: 2px; background: linear-gradient(#eafaff, #c5d9e1); }
  .units { width: 85px; margin-left: 154px; }
  .frame { width: 88px; margin-left: 207px; }
  .split { display: flex; height: 28px; margin-left: auto; margin-right: 161px; border: 1px solid #8fa0a9; border-radius: 3px; background: linear-gradient(#fff, #eee); }
  .split button { width: 34px; }
  .split button + button { width: 14px; border-left: 1px solid #8fa0a9; }
  .order { display: flex; flex: none; align-self: stretch; padding: 0 4px; gap: 3px; background: #fff; border-left: 2px solid #a9bac4; border-radius: 9px 0 0 9px; }
  .fold { align-self: center; }
  .small { align-self: center; width: 19px; height: 20px; margin-top: 4px; border: 1px solid #8fa0a9; border-radius: 3px; background: #f4f4f4; }
  .qty, .field { display: flex; flex-direction: column; align-items: center; gap: 1px; white-space: nowrap; }
  .qty { width: 46px; }
  .qty input { width: 46px; height: 22px; padding: 0 4px; border: 1px solid #8fa0a9; border-radius: 3px; font: inherit; text-align: right; color: #505; }
  .field button { height: 28px; border-radius: 3px; border: 1px solid #8fa0a9; width: 100%; }
  .lim { width: 36px; padding: 0 3px; border: solid #a9b8c0; border-width: 0 1px; }
  .lim button { background: #f2f2f2; }
  .sell, .buy { width: 62px; }
  .sell button { background: linear-gradient(#f06060, #d84040); border-color: #c03a3a; }
  .buy button { background: linear-gradient(#3cc83c, #22b022); border-color: #239a23; }

  .workspace { position: relative; display: flex; background: #fff; overflow: hidden; }
  .watermark { position: absolute; left: 0; right: 0; top: 282px; text-align: center; font: 700 238px/318px "Open Sans", sans-serif; color: #f2f2f2; white-space: nowrap; }
  .panels { position: relative; flex: 1; min-width: 0; display: flex; flex-direction: column; gap: 2px; }
  .panel { position: relative; border: 1px solid #8fa0a9; }
  .panel > svg:first-child { width: 100%; }
  .price > svg:first-child { height: 312px; }
  .di > svg:first-child { height: 155px; }
  .cycle > svg:first-child { height: 179px; }
  .trend > svg:first-child { height: 271px; }
  .panel polyline { fill: none; vector-effect: non-scaling-stroke; stroke-linejoin: round; }
  .panel path, .panel rect { vector-effect: non-scaling-stroke; }
  .hair { stroke: #ff3c3c; stroke-opacity: 0.55; stroke-width: 1; fill: none; }
  .level { stroke: #2828d8; stroke-width: 2; }
  .zero { stroke-width: 3; }
  .range { position: absolute; left: 4px; top: 0; }
  .copy { position: absolute; left: 2px; bottom: -1px; }
  .head { position: absolute; left: 0; top: 0; display: flex; align-items: center; gap: 3px; height: 17px; padding: 0 3px; border: solid #8fa0a9; border-width: 0 1px 1px 0; background: linear-gradient(#e8f3f8, #cfe0e8); white-space: nowrap; }
  .pointer { position: absolute; left: 67px; top: 124px; }
  .values { position: relative; }
  .values text, .times text { font-size: 11px; }
  .times { background: #fff; border: 0; }
  .times line { stroke: #7f929c; }
  .times .now { stroke: #000; }
  .times .strong, .values text[font-weight="700"] { font-weight: 700; font-size: 12px; }

  .bottom { display: flex; align-items: center; height: 34px; gap: 7px; padding-left: 5px; border-top: 1px solid #8fa0a9; background: linear-gradient(#dcedf6, #c9dae3 60%, #c5d8e1); }
  .bottom > button { width: 20px; }
  .scroll { display: flex; flex: 1; height: 16px; min-width: 0; }
  .end { width: 16px; border: 1px solid #8fa0a9; border-radius: 3px; background: linear-gradient(#f2fbff, #d0e2ea); }
  .track { flex: 1; display: flex; justify-content: flex-end; border: solid #8fa0a9; border-width: 1px 0; background: #c9dae3; }
  .thumb { width: 25%; border: solid #8fa0a9; border-width: 0 1px; border-radius: 3px; background: linear-gradient(#eefaff, #cfe3ea); }
  .zoom { display: flex; gap: 7px; padding: 0 4px 0 3px; }
  .zoom button { width: 21px; }
</style>
